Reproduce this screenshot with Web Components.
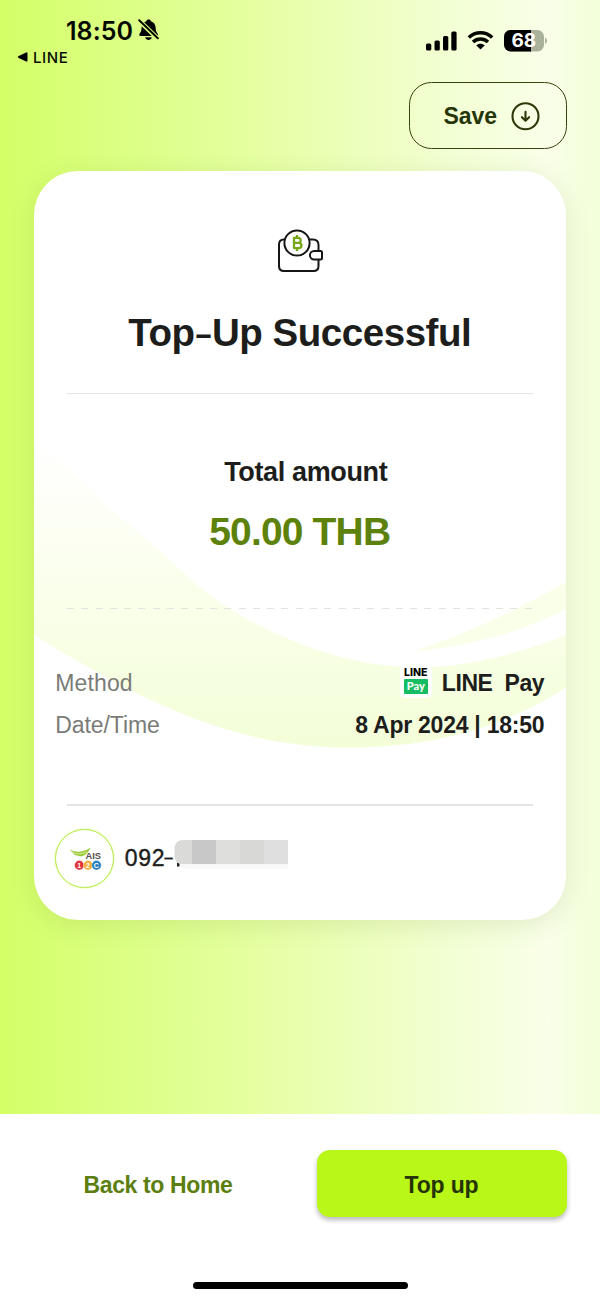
<!DOCTYPE html>
<html lang="en">
<head>
<meta charset="utf-8">
<title>Top-Up Successful</title>
<style>
html,body{margin:0;padding:0}
body{width:600px;height:1300px;overflow:hidden;background:#fff;font-family:"Liberation Sans",Arial,sans-serif;color:#1d1e1c}
</style>
</head>
<body>
<topup-screen></topup-screen>
<script>
const define = (name, html, setup) => customElements.define(name, class extends HTMLElement {
  connectedCallback() {
    if (this.shadowRoot) return;
    const t = document.createElement('template');
    t.innerHTML = html;
    this.attachShadow({mode: 'open'}).append(t.content.cloneNode(true));
    if (setup) setup(this);
  }
});

/* One line of text whose tracking is adjusted to fill a given width. */
define('ui-text', `<style>
:host{display:block;white-space:pre;line-height:1;flex:none}
span{display:inline-block}
</style><span><slot></slot></span>`, el => {
  const size = +el.getAttribute('size'), width = +el.getAttribute('fit');
  el.style.fontSize = size + 'px';
  el.style.height = size + 'px';
  el.style.width = width + 'px';
  const span = el.shadowRoot.querySelector('span');
  const natural = span.getBoundingClientRect().width;
  span.style.letterSpacing = (width - natural) / el.textContent.length + 'px';
});

define('status-bar', `<style>
:host{display:flex;justify-content:space-between;box-sizing:border-box;height:82px;padding:18px 53px 0 17px;font-family:Inter,sans-serif;color:#050a00}
.time{display:flex;padding-left:49px;font-weight:600;gap:5px}
.time ui-text{margin-top:.6px}
.back{display:flex;align-items:center;gap:5px;margin-top:6px;font-weight:500}
.right{display:flex;align-items:flex-start;padding-top:11.500px}
svg{display:block;flex:none}
.bat{position:relative;width:43px;height:22px;margin-left:10px}
.bat ui-text{position:absolute;left:7.5px;top:1.500px;color:#fff;font-weight:700}
</style>
<div><div class="time"><ui-text size="25" fit="67">18:50</ui-text>
<svg width="22" height="24" viewBox="0 0 22 24"><path d="M10.600 1.500c1.300 0 2.100.7 2.300 1.700 3 .9 4.600 3.300 4.700 6.300.1 3.600 1 4.700 2 6.200.8 1.200.3 2.300-1.100 2.300H2.700c-1.400 0-1.900-1.100-1.100-2.300 1-1.500 1.900-2.600 2-6.200.1-3 1.700-5.400 4.700-6.300.2-1 1-1.700 2.300-1.700zM7.200 19.300h6.600c-.3 1.700-1.600 2.700-3.300 2.700s-3-1-3.300-2.700z"/><path d="M1 2.500l19 18.300" stroke="#dcff81" stroke-width="4.600"/><path d="M1.200 2.300l18.600 18" stroke="#050a00" stroke-width="2" stroke-linecap="round"/></svg></div>
<div class="back"><svg width="11" height="10" viewBox="0 0 11 10"><path d="M1.700 4L9.100.4q1.400-.5 1.400 1v7.200q0 1.500-1.400 1L1.700 6q-1.700-1 0-2z"/></svg><ui-text size="15" fit="35.500">LINE</ui-text></div></div>
<div class="right">
<svg width="31" height="20" viewBox="0 0 31 20" style="margin-top:1px"><rect y="12.500" width="5.300" height="7" rx="1.500"/><rect x="8.500" y="9.500" width="5.300" height="10" rx="1.500"/><rect x="17" y="5" width="5.300" height="14.500" rx="1.500"/><rect x="25.300" y=".5" width="5.300" height="19" rx="1.500"/></svg>
<svg width="27" height="20" viewBox="0 0 27 20" style="margin:0 0 0 10px"><path d="M1.800 7.500C8.300 1.200 18.700 1.200 25.200 7.500M6 11.900c4.200-4 10.800-4 15 0" fill="none" stroke="#050a00" stroke-width="3.500"/><path d="M13.500 19.600l-4.300-4.300c2.400-2.200 6.200-2.200 8.600 0z"/></svg>
<div class="bat"><svg width="43" height="22" viewBox="0 0 43 22"><defs><clipPath id="b"><rect width="40" height="21.500" rx="6.500"/></clipPath></defs><g clip-path="url(#b)"><rect width="40" height="22" fill="#abb29b"/><rect width="27" height="22" fill="#000"/></g><path d="M41 7.500c2.600.8 2.600 5.700 0 6.500z" fill="#abb29b"/></svg><ui-text size="19" fit="24.500">68</ui-text></div>
</div>`);

define('save-button', `<style>
:host{display:flex;align-items:center;box-sizing:border-box;width:158px;height:67px;margin:.4px 33.5px 0 auto;border:1.500px solid #36430f;border-radius:22.500px;padding-left:34px;color:#263507;font-weight:700}
ui-text{margin-top:1.500px}
svg{margin:1px 0 0 14px}
</style><ui-text size="23" fit="53.500">Save</ui-text>
<svg width="29" height="29" viewBox="0 0 29 29" fill="none" stroke="#2b390a" stroke-width="2.100" stroke-linecap="round" stroke-linejoin="round"><circle cx="14.500" cy="14.300" r="13"/><path d="M14.500 9.800v8.700M10.900 15.200l3.600 3.500 3.600-3.500"/></svg>`);

define('wallet-icon', `<style>:host{display:block;width:48px;height:46px}svg{display:block}
</style><svg width="48" height="46" viewBox="0 0 48 46" fill="none" stroke="#151515" stroke-width="2"><path d="M9 12.500H8q-5 0-5 5V39q0 5 5 5h29.500q5 0 5-5v-6M42.500 24v-6q0-5.500-5.500-5.500h-4M44.500 24q1.500 0 1.500 1.500v5.500q0 1.500-1.500 1.500h-6.300a4.250 4.250 0 0 1 0-8.500z" stroke-linejoin="round"/><circle cx="21" cy="16" r="12.600" fill="#fff"/><g stroke="#78a71b" stroke-width="2.300"><path d="M18 10.800h4.200a2.500 2.500 0 0 1 0 5H18zM18 15.800h4.800a2.600 2.600 0 0 1 0 5.300H18zM21 8v2.500M21 21v3" stroke-linejoin="round"/></g></svg>`);

define('line-pay-logo', `<style>
:host{display:flex;flex-direction:column;align-items:center;box-sizing:border-box;width:32px;height:32px;border-radius:5px;background:#fff;padding-top:2.500px}
.p{display:flex;justify-content:center;box-sizing:border-box;width:24px;height:15px;margin-top:.5px;padding-top:1px;background:#16bd62;border-radius:1px;color:#fff;font-family:Lato,sans-serif;font-weight:900}
.l{font-family:Inter,sans-serif;font-weight:800;color:#000}
</style><ui-text class="l" size="10.500" fit="23.500">LINE</ui-text><div class="p"><ui-text size="11" fit="18">Pay</ui-text></div>`);

define('ais-badge', `<style>
:host{display:block;box-sizing:border-box;width:59px;height:59px;border:1.500px solid #b7e64c;border-radius:50%;box-shadow:0 0 2px #d5ff6c;background:#fff;flex:none}
svg{display:block;margin:-1px}
text{font-family:"Liberation Sans",sans-serif;font-weight:700}
</style><svg width="59" height="59" viewBox="0 0 59 59"><path d="M15 20.500c6.500 3.800 14 2.500 21-2-4.500 7.500-8 10-12.500 8.300-4.500-.3-6-3-8.500-6.300z" fill="#9acb38"/><path d="M16.500 22.500c5 3.500 11 2.500 15.500.3" fill="none" stroke="#e3f5ba" stroke-width=".8"/><text x="30.500" y="30" font-size="9.200" fill="#574c49" textLength="15.500" lengthAdjust="spacingAndGlyphs">AIS</text><g stroke="#fff" stroke-width=".3"><circle cx="24.300" cy="36.300" r="4.700" fill="#e23239"/><circle cx="33" cy="36.300" r="4.700" fill="#f5ad3b"/><circle cx="41.500" cy="36.300" r="4.700" fill="#247fc2"/></g><g fill="#fff" font-size="7" text-anchor="middle"><text x="24.300" y="38.800">1</text><text x="33" y="38.800">2</text><text x="41.300" y="38.800">C</text></g></svg>`);

define('detail-row', `<style>
:host{display:flex;align-items:center;justify-content:space-between;height:42px}
.l{color:#7a7c77}
.v{display:flex;align-items:center;font-weight:700}
</style><div class="l"><slot name="label"></slot></div><div class="v"><slot></slot></div>`);

define('phone-row', `<style>
:host{display:flex;align-items:center;height:59px}
ui-text{margin:1px 0 0 10.500px;-webkit-text-stroke:.4px #1d1e1c}
svg{margin:-7px 0 0 -1px}
</style><ais-badge></ais-badge><ui-text size="23" fit="49">092<span style="display:inline-block;transform:scale(1.400,.8)">-</span></ui-text>
<svg width="115" height="32" viewBox="0 0 115 32"><path d="M4 23.500h2.500v4H4z" fill="#222"/><path d="M7 25h108v5H13q-4-.3-6-5z" fill="#f8f8f8"/><path d="M19 1h-9q-7 0-8.500 7v9q1 8 7 8H19z" fill="#dadad8"/><path d="M19 1h24v24H19z" fill="#c8c8c8"/><path d="M43 1h24v24H43z" fill="#dededd"/><path d="M67 1h24v24H67z" fill="#d8d8d6"/><path d="M91 1h24v24H91z" fill="#dfdfdf"/></svg>`);

define('receipt-card', `<style>
:host{display:flex;flex-direction:column;align-items:center;position:relative;box-sizing:border-box;width:532.500px;height:749px;margin:22px 0 0 33.500px;border-radius:44px;background:#fff;box-shadow:0 5px 26px rgba(90,110,30,.14);overflow:hidden}
.swoosh{position:absolute;left:0;top:0}
.swoosh~*{position:relative}
wallet-icon{margin:55.600px 0 0 1px}
.line{width:466px;height:1.500px;background:#e4e4e4;flex:none}
.dash{width:466px;height:1.500px;background:repeating-linear-gradient(90deg,#e1e4dc 0 7px,transparent 7px 14.300px);flex:none}
.rows{width:489px;flex:none}
</style>
<svg class="swoosh" width="533" height="749" viewBox="33.500 171.500 533 749"><defs><linearGradient id="g" gradientUnits="userSpaceOnUse" x1="0" y1="440" x2="0" y2="748"><stop stop-color="#fff"/><stop offset=".5" stop-color="#faffeb"/><stop offset="1" stop-color="#f3fed8"/></linearGradient></defs><path fill="url(#g)" d="M33 432C68 471 105 507 149 542C173 564 197 587 222 605C280 641 345 667 416 668C468 668 520 654 567 635V687C497 732 425 748 349 748C230 748 138 700 33 635z"/><path fill="#f9ffe8" d="M412 652C466 635 517 610 567 582V609C520 632 475 646 412 652z"/></svg>
<wallet-icon></wallet-icon>
<ui-text style="font-weight:700;margin:41px 0 0" size="38.500" fit="343">Top<span style="display:inline-block;transform:translateY(1px) scale(1.450,.75);margin:0 2.500px">-</span>Up Successful</ui-text>
<div class="line" style="margin-top:40.500px"></div>
<ui-text style="font-weight:700;margin:64.500px 0 0 12px" size="27" fit="163">Total amount</ui-text>
<ui-text style="font-weight:700;color:#5d820b;margin:26.500px 0 0" size="39" fit="181">50.00 THB</ui-text>
<div class="dash" style="margin-top:56.500px"></div>
<div class="rows" style="margin-top:53px">
<detail-row><ui-text slot="label" size="23" fit="77.500">Method</ui-text><line-pay-logo style="margin:-3px 10px 0 0"></line-pay-logo><ui-text size="23" fit="102.500">LINE&nbsp; Pay</ui-text></detail-row>
<detail-row><ui-text slot="label" size="23" fit="104.500">Date/Time</ui-text><ui-text size="23" fit="189">8 Apr 2024 | 18:50</ui-text></detail-row>
</div>
<div class="line" style="margin-top:58px"></div>
<phone-row class="rows" style="margin-top:22.800px"></phone-row>`);

define('action-bar', `<style>
:host{display:block;height:186px;background:#fff}
.buttons{display:grid;grid-template-columns:283.500px 250px;padding:36px 0 0 33px;font-weight:700}
.b{display:flex;align-items:center;justify-content:center;height:67px;border-radius:13px}
.b ui-text{margin-top:3.200px}
.back{color:#5c7e10;width:250px}
.top{background:#b9f718;color:#263507;box-shadow:0 3px 5px rgba(0,0,0,.28)}
.home{width:215px;height:7.500px;border-radius:4px;background:#000;margin:64.500px auto 0}
</style><div class="buttons"><div class="b back"><ui-text size="23" fit="149">Back to Home</ui-text></div><div class="b top"><ui-text size="23" fit="74">Top up</ui-text></div></div><div class="home"></div>`);

define('topup-screen', `<style>
:host{display:flex;flex-direction:column;width:600px;height:1300px;overflow:hidden;background:linear-gradient(90deg,#d4ff66 0,#d8ff76 60px,#deff8c 160px,#e6ffa3 260px,#edffbf 370px,#f3ffd6 460px,#f9ffe8 548px,#f2fed9 600px)}
action-bar{margin-top:auto}
</style><status-bar></status-bar><save-button></save-button><receipt-card></receipt-card><action-bar></action-bar>`);
</script>
</body>
</html>
